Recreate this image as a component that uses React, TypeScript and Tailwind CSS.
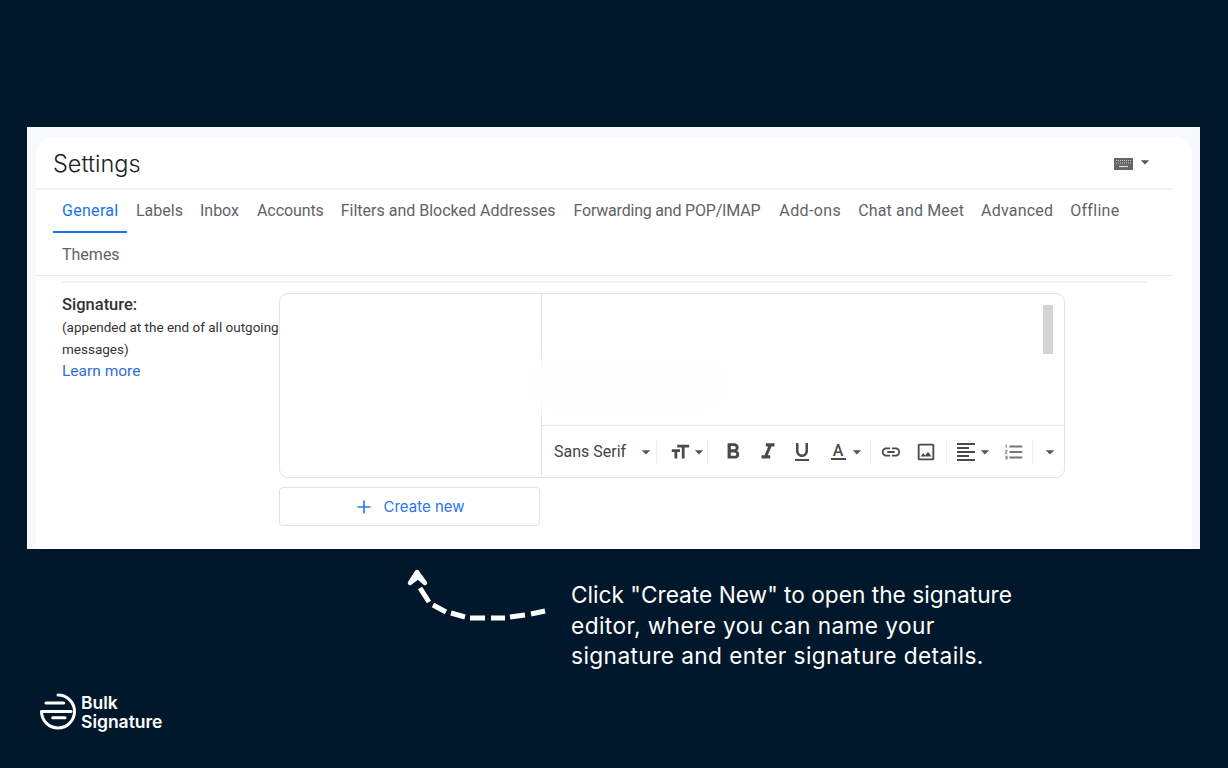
import { Plus } from "lucide-react";
import {
  MdArrowDropDown,
  MdFormatAlignLeft,
  MdFormatBold,
  MdFormatItalic,
  MdFormatListNumbered,
  MdFormatSize,
  MdFormatUnderlined,
  MdLink,
  MdOutlineImage,
} from "react-icons/md";

const TABS = [
  { label: "Labels", className: "" },
  { label: "Inbox", className: "" },
  { label: "Accounts", className: "ml-[1px] tracking-[-0.1px]" },
  { label: "Filters and Blocked Addresses", className: "" },
  { label: "Forwarding and POP/IMAP", className: "ml-[1px] tracking-[-0.2px]" },
  { label: "Add-ons", className: "ml-[2px] tracking-[0.4px]" },
  { label: "Chat and Meet", className: "tracking-[0.15px]" },
  { label: "Advanced", className: "tracking-[0.2px]" },
  { label: "Offline", className: "tracking-[0.3px]" },
];

function Caret({ className }: { className: string }) {
  return (
    <span className={`w-[14px] shrink-0 flex justify-center ${className}`}>
      <MdArrowDropDown className="shrink-0 text-[20px] text-[#555]" />
    </span>
  );
}

function Sep({ className }: { className: string }) {
  return <div className={`w-px h-[24px] shrink-0 bg-[#eceef1] ${className}`} />;
}

function Toolbar() {
  const tool = "shrink-0 text-[22px] text-[#4a4a4a]";
  return (
    <div className="h-[51px] flex items-center pl-[12px] font-['Roboto',sans-serif]">
      <span className="w-[72px] shrink-0 text-[16px] text-[#444] whitespace-nowrap">Sans Serif</span>
      <Caret className="ml-[13px]" />
      <Sep className="ml-[3px]" />
      <MdFormatSize className={`${tool} ml-[12px]`} />
      <Caret className="ml-[1px]" />
      <Sep className="ml-[1px]" />
      <MdFormatBold className={`${tool} ml-[12px] text-[26px]`} />
      <MdFormatItalic className={`${tool} ml-[9px] text-[26px]`} />
      <MdFormatUnderlined className={`${tool} ml-[9px] text-[24px]`} />
      <span className="ml-[13px] w-[22px] shrink-0 flex flex-col items-center text-[#4a4a4a]">
        <span className="text-[16px] leading-[15px] font-medium">A</span>
        <span className="w-[15px] h-[2px] bg-[#4a4a4a]" />
      </span>
      <Caret className="ml-[1px]" />
      <Sep className="ml-[6px]" />
      <MdLink className={`${tool} ml-[9px]`} />
      <MdOutlineImage className={`${tool} ml-[13px]`} />
      <Sep className="ml-[9px]" />
      <MdFormatAlignLeft className={`${tool} ml-[7px] text-[24px]`} />
      <Caret className="ml-0" />
      <MdFormatListNumbered className="shrink-0 text-[22px] text-[#777] ml-[11px]" />
      <Sep className="ml-[7px]" />
      <Caret className="ml-[10px]" />
    </div>
  );
}

function KeyboardIcon() {
  return (
    <svg width="19" height="12" viewBox="0 0 19 12" className="block">
      <rect width="19" height="12" fill="#666" />
      <path d="M2 2.5H17M2 5H17" stroke="#c9c9c9" strokeWidth="1" strokeDasharray="1 1" />
      <path d="M5 8.5H14" stroke="#d8d8d8" strokeWidth="1.2" />
    </svg>
  );
}

function DashedArrow() {
  return (
    <svg width="150" height="60" viewBox="0 0 150 60" fill="none" className="block shrink-0">
      <path
        d="M140 45 L126 48 M120 49 L105 51 M100 52 L86 52 M80 52 L65 52 M60 51 L46 47 M41 46 L28 39 M24 36 L15 22"
        stroke="white"
        strokeWidth="5"
      />
      <path d="M5 17 L12 6 L20 17 L13 11 Z" fill="white" stroke="white" strokeWidth="4.5" strokeLinecap="round" strokeLinejoin="round" />
    </svg>
  );
}

function Logo() {
  return (
    <svg width="38" height="40" viewBox="0 0 38 40" fill="none" className="block shrink-0">
      <path d="M18 3 A16.5 16.5 0 1 1 1.5 19.5" stroke="white" strokeWidth="3" strokeLinecap="round" />
      <path d="M6 11 L23.7 11" stroke="white" strokeWidth="3" strokeLinecap="round" />
      <path d="M2 19.5 L31 19.5" stroke="white" strokeWidth="3" strokeLinecap="round" />
      <path d="M12.7 25.7 L25 25.7" stroke="white" strokeWidth="3" strokeLinecap="round" />
    </svg>
  );
}

export default function App() {
  return (
    <div className="w-[1228px] h-[768px] overflow-hidden bg-[#01172b] pt-[127px] font-['Inter',sans-serif]">
      <div className="ml-[27px] w-[1173px] h-[422px] bg-[#f7f9fd] pt-[10px] pl-[9px] pr-[8px]">
        <div className="h-full bg-white rounded-t-[18px] font-['Roboto',sans-serif]">
          <div className="w-[1136px] h-[53px] flex items-center justify-between pl-[17px] pr-[17px] border-b-2 border-[#f0f1f3]">
            <h1 className="font-['Inter',sans-serif] font-light text-[23.5px] text-[#202124] pt-[2px]">Settings</h1>
            <div className="flex items-center gap-[2px] text-[#555] mt-[2px]">
              <KeyboardIcon />
              <MdArrowDropDown className="text-[20px] -mt-[3px]" />
            </div>
          </div>
          <div className="w-[1136px] border-b border-[#e8eaed]">
            <div className="flex items-center h-[43px] pl-[17px] text-[16px] text-[#5f6368] whitespace-nowrap">
              <div className="h-[43px] w-[74px] flex items-center pl-[9px] mr-[9px] tracking-[0.3px] text-[#1a73e8] border-b-2 border-[#1a73e8]">General</div>
              <div className="flex items-center gap-[17px] pb-[2px]">
                {TABS.map((tab) => (
                  <span key={tab.label} className={tab.className}>
                    {tab.label}
                  </span>
                ))}
              </div>
            </div>
            <div className="h-[42px] pt-[1px] flex items-center pl-[26px] text-[16px] text-[#5f6368]">Themes</div>
          </div>
          <div className="ml-[26px] w-[1085px] h-[2px] mt-[5px] bg-[#f0f1f3]" />
          <div className="flex mt-[10px] pl-[26px]">
            <div className="w-[217px] shrink-0 pt-[2px] whitespace-nowrap">
              <p className="text-[16.5px] leading-[20px] font-medium text-[#333]">Signature:</p>
              <p className="text-[13.5px] leading-[22px] mt-[1px] mb-[1px] text-[#333]">
                (appended at the end of all outgoing
                <br />
                messages)
              </p>
              <a className="block text-[15.5px] leading-[20px] text-[#2f6fd6]">Learn more</a>
            </div>
            <div>
              <div className="w-[786px] h-[185px] flex border border-[#e1e3e6] rounded-[9px] bg-white">
                <div className="w-[262px] shrink-0 border-r border-[#e1e3e6]" />
                <div className="flex-1 flex flex-col min-w-0">
                  <div className="relative flex-1 border-b border-[#e1e3e6]">
                    <div className="absolute left-[-16px] top-[62px] w-[204px] h-[58px] rounded-[30px] bg-[#fdfdfd] blur-[6px]" />
                    <div className="absolute right-[11px] top-[11px] w-[10px] h-[49px] bg-[#d4d4d4]" />
                  </div>
                  <Toolbar />
                </div>
              </div>
              <button className="mt-[9px] w-[261px] h-[39px] pt-[1px] flex items-center justify-center border border-[#dfe1e4] rounded-[4px] text-[15px] text-[#2a76ee] font-['Inter',sans-serif]">
                <Plus size={20} strokeWidth={2} className="mr-[9px]" />
                Create new
              </button>
            </div>
          </div>
        </div>
      </div>
      <div className="flex items-start">
        <div className="ml-[405px] mt-[17px]">
          <DashedArrow />
        </div>
        <p className="ml-[16px] mt-[31px] w-[470px] whitespace-nowrap text-[22.7px] leading-[30.5px] text-white">
          Click "Create New" to open the signature
          <br />
          <span className="tracking-[0.4px]">editor, where you can name your</span>
          <br />
          <span className="tracking-[0.4px]">signature and enter signature details.</span>
        </p>
      </div>
      <div className="flex items-center ml-[40px] mt-[20px]">
        <Logo />
        <div className="ml-[3px] mt-[1px] text-[17.5px] leading-[19px] font-semibold text-white">
          <div>Bulk</div>
          <div>Signature</div>
        </div>
      </div>
    </div>
  );
}
